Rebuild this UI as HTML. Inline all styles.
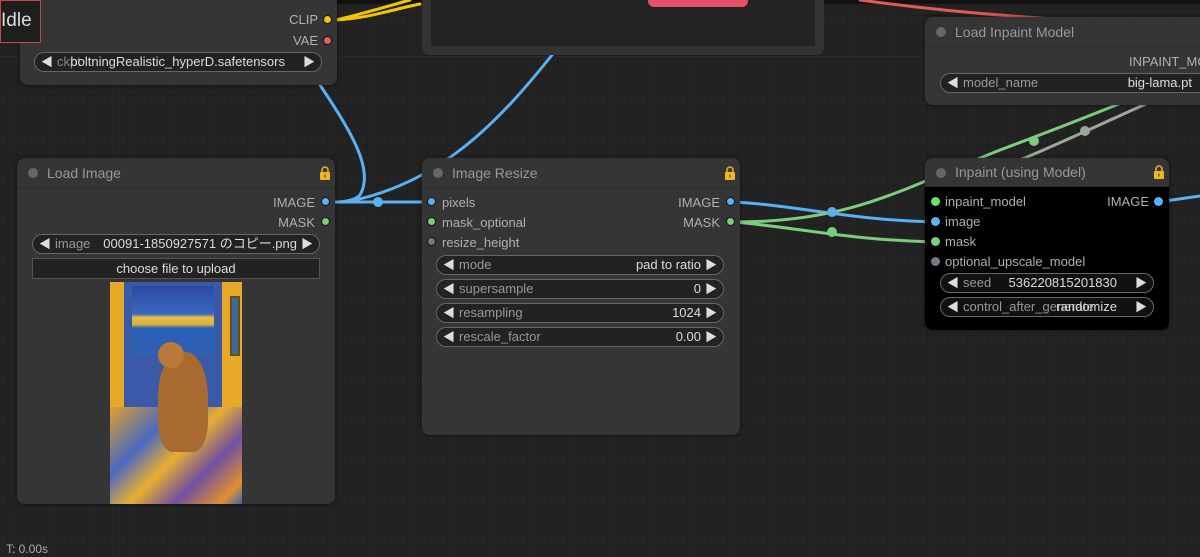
<!DOCTYPE html>
<html><head><meta charset="utf-8"><style>
*{box-sizing:border-box;margin:0;padding:0}
body{width:1200px;height:557px;overflow:hidden;background:#232323;font-family:"Liberation Sans","Noto Sans CJK JP",sans-serif;position:relative;
background-image:linear-gradient(#1e1e1e 1px,transparent 1px),linear-gradient(90deg,#1e1e1e 1px,transparent 1px);background-size:10px 10px;background-position:-3px 5px}
.a{position:absolute}
.node{position:absolute;background:#353535;border-radius:8px;box-shadow:0 0 4px rgba(0,0,0,.5)}
.title{position:absolute;left:0;right:0;top:0;height:30px;border-bottom:1px solid #2b2b2b;color:#999;font-size:14px;line-height:30px;padding-left:30px}
.title:before{content:"";position:absolute;left:11px;top:10px;width:10px;height:10px;border-radius:50%;background:#666}
.lbl{position:absolute;font-size:13px;color:#b0b0b0;line-height:14px}
.dot{position:absolute;width:9px;height:9px;border-radius:50%;border:1px solid #111}
.w{position:absolute;height:20px;border:1px solid #666;border-radius:10px;background:#222;font-size:13px;color:#999;line-height:18px}
.w .l{position:absolute;left:22px}.w .v{position:absolute;right:22px;color:#ddd}
.w:before{content:"◀";position:absolute;left:6px;color:#ddd;font-size:12px}
.w:after{content:"▶";position:absolute;right:6px;color:#ddd;font-size:12px}
.lock{position:absolute;width:12px;height:14px}
</style></head><body>
<div class="a" style="left:0;top:0;width:1200px;height:4px;background:#111"></div>
<div class="a" style="left:0;top:56px;width:1200px;height:1px;background:#1f2a44"></div>
<div class="a" style="left:118px;top:56px;width:1px;height:501px;background:#1f2a44"></div>

<svg class="a" style="left:0;top:0" width="1200" height="557">
<g fill="none" stroke-width="3" stroke-linecap="round">
<path d="M336,20 C370,18 390,10 420,4" stroke="#f5c400"/>
<path d="M336,20 C370,12 395,4 410,0" stroke="#f5c400"/>
<path d="M860,0 C920,8 980,16 1200,28" stroke="#e05a5a"/>
<path d="M320,85 C350,130 375,170 360,195 C355,200 345,202 338,202" stroke="#5ab0f0"/>
<path d="M552,55 C500,120 440,185 345,202" stroke="#5ab0f0"/>
<path d="M330,202 L432,202" stroke="#5ab0f0"/>
<path d="M735,202 C800,206 850,220 935,222" stroke="#5ab0f0"/>
<path d="M735,222 C800,228 850,240 935,242" stroke="#7ccc7c"/>
<path d="M735,222 C850,222 900,190 1000,150 C1080,120 1130,100 1200,70" stroke="#7ccc7c"/>
<path d="M1020,160 C1080,135 1130,110 1200,80" stroke="#9aa89a"/>
<path d="M1165,201 L1200,196" stroke="#5ab0f0"/>
</g>
<g>
<circle cx="378" cy="202" r="5" fill="#5ab0f0"/>
<circle cx="832" cy="212" r="5" fill="#5ab0f0"/>
<circle cx="832" cy="232" r="5" fill="#7ccc7c"/>
<circle cx="1034" cy="141" r="5" fill="#7ccc7c"/>
<circle cx="1085" cy="131" r="5" fill="#9aa89a"/>
</g>
</svg>

<!-- top-left node -->
<div class="node" style="left:20px;top:-10px;width:317px;height:95px">
<div class="lbl" style="right:19px;top:23px">CLIP</div><div class="dot" style="right:5px;top:25px;background:#f5c400"></div>
<div class="lbl" style="right:19px;top:44px">VAE</div><div class="dot" style="right:5px;top:46px;background:#f05a5a"></div>
<div class="w" style="left:14px;top:62px;width:288px"><span class="l" style="color:#888">ckpt</span><span class="v" style="right:36px">boltningRealistic_hyperD.safetensors</span></div>
</div>
<div class="a" style="left:0;top:0;width:41px;height:43px;border:1px solid #c04a4a;background:#1e1e1e;color:#ddd;font-size:19px;line-height:40px">Idle</div>

<!-- top center node -->
<div class="a" style="left:422px;top:-10px;width:402px;height:65px;border:9px solid #333;border-radius:8px;background:#232323"></div>
<div class="a" style="left:648px;top:0;width:100px;height:7px;background:#e35068;border-radius:0 0 6px 6px"></div>

<!-- Load Inpaint Model -->
<div class="node" style="left:925px;top:17px;width:290px;height:88px">
<div class="title">Load Inpaint Model</div>
<div class="lbl" style="left:204px;top:38px">INPAINT_MC</div>
<div class="w" style="left:15px;top:56px;width:290px"><span class="l">model_name</span><span class="v" style="right:37px">big-lama.pt</span></div>
</div>

<!-- Load Image -->
<div class="node" style="left:17px;top:158px;width:318px;height:346px">
<div class="title">Load Image</div>
<svg class="lock" style="right:4px;top:8px" viewBox="0 0 12 14"><path d="M3,6V4a3,3 0 0 1 6,0V6" fill="none" stroke="#e8b020" stroke-width="1.6"/><rect x="1" y="6" width="10" height="8" rx="1" fill="#f0b820"/><rect x="5.3" y="8.5" width="1.4" height="3" fill="#7a5a10"/></svg>
<div class="lbl" style="right:20px;top:38px">IMAGE</div><div class="dot" style="right:5px;top:39px;background:#5ab0f0"></div>
<div class="lbl" style="right:20px;top:58px">MASK</div><div class="dot" style="right:5px;top:59px;background:#7ccc7c"></div>
<div class="w" style="left:15px;top:76px;width:288px"><span class="l">image</span><span class="v">00091-1850927571 のコピー.png</span></div>
<div class="a" style="left:15px;top:100px;width:288px;height:21px;background:#222;border:1px solid #555;color:#ddd;font-size:13px;text-align:center;line-height:19px">choose file to upload</div>
<div class="a" style="left:93px;top:124px;width:132px;height:222px;overflow:hidden;background:#e8a828">
<div class="a" style="left:14px;top:0;width:98px;height:125px;background:#3a5aa8"></div>
<div class="a" style="left:22px;top:4px;width:82px;height:70px;background:linear-gradient(#2a4aa0 0%,#3a68c0 40%,#e8c040 45%,#d8b040 55%,#2a60b8 60%,#3060b0 100%)"></div>
<div class="a" style="left:0;top:125px;width:132px;height:97px;background:linear-gradient(135deg,#e0a030,#4a6ac0 30%,#e8b030 50%,#7050a0 70%,#e09030 90%,#4060b0)"></div>
<div class="a" style="left:120px;top:14px;width:10px;height:60px;background:#3a6a9a;border:2px solid #6a4a20"></div>
<div class="a" style="left:48px;top:70px;width:50px;height:100px;border-radius:45% 45% 30% 30%;background:#a86a30"></div>
<div class="a" style="left:48px;top:60px;width:26px;height:26px;border-radius:50%;background:#b87a38"></div>
</div>
</div>

<!-- Image Resize -->
<div class="node" style="left:422px;top:158px;width:318px;height:277px">
<div class="title">Image Resize</div>
<svg class="lock" style="right:4px;top:8px" viewBox="0 0 12 14"><path d="M3,6V4a3,3 0 0 1 6,0V6" fill="none" stroke="#e8b020" stroke-width="1.6"/><rect x="1" y="6" width="10" height="8" rx="1" fill="#f0b820"/><rect x="5.3" y="8.5" width="1.4" height="3" fill="#7a5a10"/></svg>
<div class="dot" style="left:5px;top:39px;background:#5ab0f0"></div><div class="lbl" style="left:20px;top:38px">pixels</div>
<div class="dot" style="left:5px;top:59px;background:#7ccc7c"></div><div class="lbl" style="left:20px;top:58px">mask_optional</div>
<div class="dot" style="left:5px;top:79px;background:#777788"></div><div class="lbl" style="left:20px;top:78px">resize_height</div>
<div class="lbl" style="right:20px;top:38px">IMAGE</div><div class="dot" style="right:5px;top:39px;background:#5ab0f0"></div>
<div class="lbl" style="right:20px;top:58px">MASK</div><div class="dot" style="right:5px;top:59px;background:#7ccc7c"></div>
<div class="w" style="left:14px;top:97px;width:288px"><span class="l">mode</span><span class="v">pad to ratio</span></div>
<div class="w" style="left:14px;top:121px;width:288px"><span class="l">supersample</span><span class="v">0</span></div>
<div class="w" style="left:14px;top:145px;width:288px"><span class="l">resampling</span><span class="v">1024</span></div>
<div class="w" style="left:14px;top:169px;width:288px"><span class="l">rescale_factor</span><span class="v">0.00</span></div>
</div>

<!-- Inpaint -->
<div class="node" style="left:925px;top:158px;width:244px;height:172px;background:#000">
<div class="title" style="background:#353535;border-radius:8px 8px 0 0;height:29px;line-height:29px">Inpaint (using Model)</div>
<svg class="lock" style="right:4px;top:7px" viewBox="0 0 12 14"><path d="M3,6V4a3,3 0 0 1 6,0V6" fill="none" stroke="#e8b020" stroke-width="1.6"/><rect x="1" y="6" width="10" height="8" rx="1" fill="#f0b820"/><rect x="5.3" y="8.5" width="1.4" height="3" fill="#7a5a10"/></svg>
<div class="dot" style="left:6px;top:39px;background:#6ee06e;border:none"></div><div class="lbl" style="left:20px;top:37px">inpaint_model</div>
<div class="dot" style="left:6px;top:59px;background:#5ab0f0;border:none"></div><div class="lbl" style="left:20px;top:57px">image</div>
<div class="dot" style="left:6px;top:79px;background:#7ccc7c;border:none"></div><div class="lbl" style="left:20px;top:77px">mask</div>
<div class="dot" style="left:6px;top:99px;background:#777788;border:none"></div><div class="lbl" style="left:20px;top:97px">optional_upscale_model</div>
<div class="lbl" style="right:20px;top:37px">IMAGE</div><div class="dot" style="right:6px;top:39px;background:#5ab0f0;border:none"></div>
<div class="w" style="left:15px;top:115px;width:214px;background:#111"><span class="l">seed</span><span class="v" style="right:36px">536220815201830</span></div>
<div class="w" style="left:15px;top:139px;width:214px;background:#111"><span class="l">control_after_generate</span><span class="v" style="right:36px;background:none">randomize</span></div>
</div>

<div class="a" style="left:6px;top:542px;color:#aaa;font-size:12px">T: 0.00s</div>
</body></html>
